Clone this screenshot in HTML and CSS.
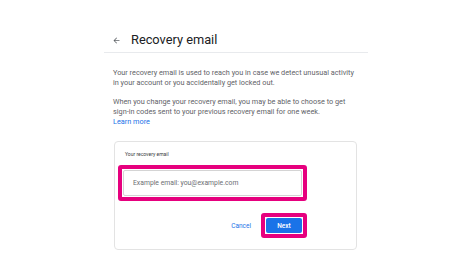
FILE: index.html
```html
<!DOCTYPE html>
<html lang="en">
<head>
  <meta charset="UTF-8">
  <title>Recovery email</title>
  <link rel="stylesheet" href="styles.css">
</head>
<body>

  <div class="page">
    <div class="header">
      <svg class="back" width="9" height="9" viewBox="0 0 24 24"><path d="M20 11H7.83l5.59-5.59L12 4l-8 8 8 8 1.41-1.41L7.83 13H20v-2z" fill="#5f6368"/></svg>
      <h1>Recovery email</h1>
    </div>

    <p class="info">
      Your recovery email is used to reach you in case we detect unusual activity
      in your account or you accidentally get locked out.
    </p>
    <p class="info">
      When you change your recovery email, you may be able to choose to get
      sign-in codes sent to your previous recovery email for one week.<br>
      <a href="#" class="link">Learn more</a>
    </p>

    <div class="card">
      <div class="card-body">
        <div class="label">Your recovery email</div>
        <div class="highlight">
          <input class="email-input" type="text" placeholder="Example email: you@example.com">
        </div>
        <div class="actions">
          <button class="btn-cancel">Cancel</button>
          <div class="highlight highlight-btn">
            <button class="btn-next">Next</button>
          </div>
        </div>
      </div>
    </div>
  </div>

</body>
</html>
```

FILE: styles.css
```css
body {
  margin: 0;
  background: #fff;
  font-family: Roboto, Arial, sans-serif;
}

.page {
  width: 264px;
  margin-left: 104px;
  padding-top: 28px;
}

.header {
  display: flex;
  align-items: center;
  gap: 10px;
  height: 24px;
  padding-left: 8px;
  border-bottom: 1px solid #e8eaed;
}

.back {
  display: block;
}

h1 {
  margin: 0;
  font-size: 12.8px;
  font-weight: 400;
  color: #202124;
  line-height: 20px;
}

.info {
  width: 245px;
  margin: 15px 0 0 9px;
  font-size: 7.3px;
  line-height: 10px;
  color: #5f6368;
}

.info + .info {
  margin-top: 9px;
}

.link {
  color: #1a73e8;
  text-decoration: none;
}

.card {
  margin: 14px 11px 0 10px;
  border: 1px solid #e3e3e3;
  border-radius: 4px;
  padding: 8px 0 11px 3px;
}

.card-body {
  width: 189px;
}

.label {
  margin-left: 7px;
  font-size: 5px;
  line-height: 8px;
  color: #3c4043;
}

.highlight {
  margin-top: 7px;
  border: 4px solid #e6007e;
  border-radius: 3px;
  padding: 1px;
}

.email-input {
  display: block;
  box-sizing: border-box;
  width: 100%;
  height: 26px;
  border: 1px solid #d4d4d4;
  border-radius: 2px;
  padding: 0 0 0 9px;
  font-family: Roboto, Arial, sans-serif;
  font-size: 6.8px;
  color: #202124;
  outline: none;
}

.email-input::placeholder {
  color: #6b6e72;
}

.actions {
  display: flex;
  justify-content: flex-end;
  align-items: center;
  gap: 8px;
  margin-top: 12px;
}

.btn-cancel {
  background: none;
  border: none;
  padding: 0 2px;
  font-family: Roboto, Arial, sans-serif;
  font-size: 6.5px;
  color: #1a73e8;
}

.highlight-btn {
  margin-top: 0;
  padding: 1px;
}

.btn-next {
  display: block;
  width: 36px;
  height: 15px;
  background: #1a73e8;
  color: #fff;
  border: none;
  border-radius: 2px;
  font-family: Roboto, Arial, sans-serif;
  font-size: 6.5px;
  font-weight: 500;
  padding: 0;
}
```
